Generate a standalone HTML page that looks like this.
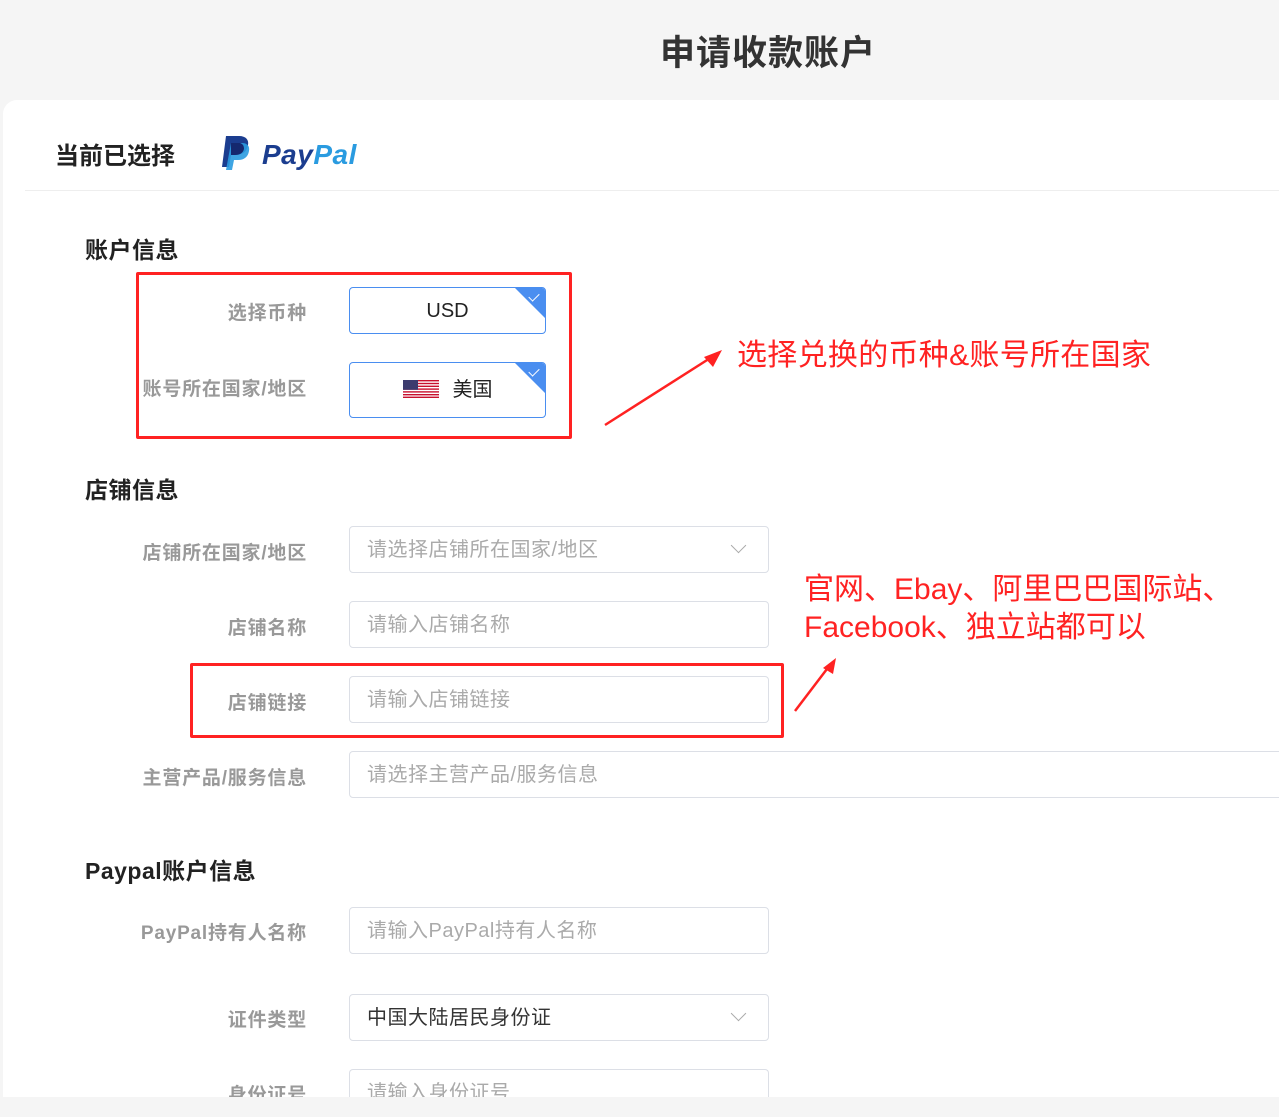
<!DOCTYPE html>
<html><head><meta charset="utf-8"><style>
*{margin:0;padding:0;box-sizing:border-box}
body{width:1279px;height:1104px;background:#f5f5f5;position:relative;overflow:hidden;font-family:"Liberation Sans","Noto Sans CJK SC",sans-serif}
.a{position:absolute}
.card{left:3px;top:100px;width:1290px;height:997px;background:#fff;border-radius:14px 0 0 0}
.title{left:660px;top:25px;font-size:35px;font-weight:bold;color:#333;letter-spacing:1px}
.h{font-size:23px;font-weight:bold;color:#222;left:85px;letter-spacing:0.5px}
.lb{font-size:19px;font-weight:bold;color:#999;right:972px;text-align:right;white-space:nowrap;letter-spacing:0.8px}
.in{left:349px;width:420px;height:47px;border:1.5px solid #dcdfe6;border-radius:4px;font-size:20px;color:#aaa;padding-left:17px;line-height:46px;letter-spacing:0.5px}
.dd::after{content:"";position:absolute;right:24px;top:13px;width:10px;height:10px;border-right:1.3px solid #aaa;border-bottom:1.3px solid #aaa;transform:rotate(45deg)}
.sel{left:349px;width:197px;border:1.5px solid #4a8ef0;border-radius:4px;overflow:hidden;font-size:20px;color:#222;text-align:center}
.tri{position:absolute;right:0;top:0;width:0;height:0;border-top:30px solid #4a8ef0;border-left:30px solid transparent}
.tri::after{content:"";position:absolute;left:-14px;top:-27px;width:5px;height:9px;border-right:1.3px solid #fff;border-bottom:1.3px solid #fff;transform:rotate(45deg)}
.red{border:3px solid #f22;border-radius:2px}
.note{color:#f22;font-size:30px;line-height:38px;white-space:nowrap}
</style></head><body>
<div class="a title">申请收款账户</div>
<div class="a card"></div>
<div class="a" style="left:55px;top:136px;font-size:24px;font-weight:bold;color:#222">当前已选择</div>
<svg class="a" style="left:220px;top:135px" width="34" height="36" viewBox="0 0 34 36">
<path d="M6 1h13c7 0 10 4 9 9-1 7-6 10-13 10h-4l-2 12H2z" fill="#1b3d8f"/>
<path d="M11 8h11c5 0 8 3 7 8-1 6-5 9-11 9h-4l-2 10H6z" fill="#2a9be0" opacity=".9"/>
<path d="M11 8h9c3 1 4 3 4 6-1 4-4 6-9 6h-4z" fill="#15286e"/>
</svg>
<div class="a" style="left:262px;top:139px;font-size:28px;font-weight:bold;font-style:italic;letter-spacing:0.5px"><span style="color:#1b3d8f">Pay</span><span style="color:#2a9be0">Pal</span></div>
<div class="a" style="left:25px;top:190px;width:1260px;height:1px;background:#eee"></div>

<div class="a h" style="top:231px">账户信息</div>
<div class="a red" style="left:136px;top:272px;width:436px;height:167px"></div>
<div class="a lb" style="top:298px">选择币种</div>
<div class="a sel" style="top:287px;height:47px;line-height:46px">USD<div class="tri"></div></div>
<div class="a lb" style="top:374px">账号所在国家/地区</div>
<div class="a sel" style="top:362px;height:56px;line-height:54px">
<svg style="vertical-align:middle;margin-right:14px;margin-top:-4px" width="36" height="18" viewBox="0 0 36 18">
<rect width="36" height="18" fill="#fff"/>
<g fill="#c8102e"><rect y="0" width="36" height="1.4"/><rect y="2.8" width="36" height="1.4"/><rect y="5.6" width="36" height="1.4"/><rect y="8.4" width="36" height="1.4"/><rect y="11.2" width="36" height="1.4"/><rect y="14" width="36" height="1.4"/><rect y="16.6" width="36" height="1.4"/></g>
<rect width="15" height="9.8" fill="#3c3b6e"/></svg>美国<div class="tri"></div></div>

<svg class="a" style="left:600px;top:345px" width="130" height="85"><line x1="5" y1="80" x2="115" y2="10" stroke="#f22" stroke-width="2.5"/><path d="M122 5 L104 12 L113 22z" fill="#f22"/></svg>
<div class="a note" style="left:737px;top:337px;letter-spacing:0.3px">选择兑换的币种&amp;账号所在国家</div>

<div class="a h" style="top:471px">店铺信息</div>
<div class="a lb" style="top:538px">店铺所在国家/地区</div>
<div class="a in dd" style="top:526px">请选择店铺所在国家/地区</div>
<div class="a lb" style="top:613px">店铺名称</div>
<div class="a in" style="top:601px">请输入店铺名称</div>
<div class="a red" style="left:190px;top:663px;width:594px;height:75px"></div>
<div class="a lb" style="top:688px">店铺链接</div>
<div class="a in" style="top:676px">请输入店铺链接</div>
<div class="a lb" style="top:763px">主营产品/服务信息</div>
<div class="a in" style="top:751px;width:940px">请选择主营产品/服务信息</div>

<svg class="a" style="left:790px;top:655px" width="50" height="60"><line x1="5" y1="56" x2="40" y2="10" stroke="#f22" stroke-width="2.5"/><path d="M46 3 L33 13 L43 19z" fill="#f22"/></svg>
<div class="a note" style="left:804px;top:571px">官网、Ebay、阿里巴巴国际站、<br>Facebook、独立站都可以</div>

<div class="a h" style="top:852px">Paypal账户信息</div>
<div class="a lb" style="top:918px">PayPal持有人名称</div>
<div class="a in" style="top:907px">请输入PayPal持有人名称</div>
<div class="a lb" style="top:1005px">证件类型</div>
<div class="a in dd" style="top:994px;color:#333">中国大陆居民身份证</div>
<div class="a lb" style="top:1080px">身份证号</div>
<div class="a in" style="top:1069px;height:28px;border-bottom:none;border-radius:4px 4px 0 0">请输入身份证号</div>
<div class="a" style="left:0;top:1097px;width:1279px;height:20px;background:#f5f5f5;z-index:5"></div>
</body></html>
